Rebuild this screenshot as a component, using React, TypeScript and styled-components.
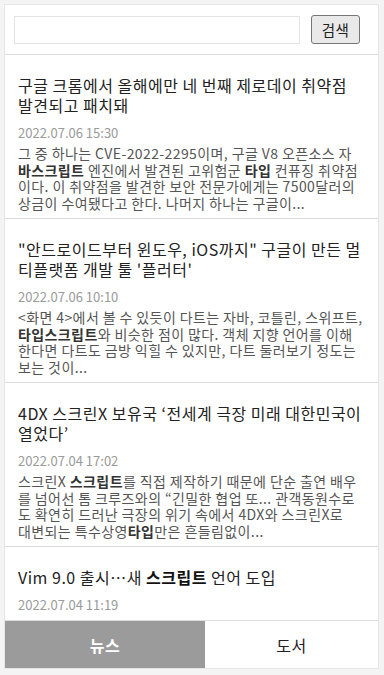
import React from "react";
import styled, { createGlobalStyle } from "styled-components";

const GlobalStyle = createGlobalStyle`
  * {
    box-sizing: border-box;
  }
  body {
    margin: 0;
    background: #f4f4f4;
    font-family: "Noto Sans CJK KR", "Noto Sans", sans-serif;
    color: #222;
  }
`;

const Page = styled.div`
  display: flex;
  flex-direction: column;
  width: 375px;
  height: 665px;
  margin: 4px 0 0 4px;
  background: #fff;
  border: 1px solid #e6e6e6;
  overflow: hidden;
`;

const SearchBar = styled.form`
  display: flex;
  align-items: center;
  gap: 11px;
  padding: 10px 18px 10px 9px;
  border-bottom: 1px solid #dcdcdc;
`;

const SearchInput = styled.input`
  flex: 1;
  height: 28px;
  border: 1px solid #e4e4e4;
  outline: none;
  font-family: inherit;
  font-size: 14px;
  padding: 0 6px;
`;

const SearchButton = styled.button`
  width: 49px;
  height: 29px;
  background: #e9e9e9;
  border: 1px solid #767676;
  border-radius: 3px;
  font-family: inherit;
  font-size: 14.5px;
  letter-spacing: 0.5px;
  color: #222;
  padding: 0;
`;

const NewsList = styled.ul`
  flex: 1;
  list-style: none;
  margin: 0;
  padding: 0;
  overflow: hidden;
`;

const NewsItem = styled.li`
  height: 164px;
  padding: 20px 13px 0 13px;
  border-bottom: 1px solid #dcdcdc;
  overflow: hidden;
`;

const Title = styled.h2`
  margin: 0;
  font-size: 16px;
  font-weight: 400;
  letter-spacing: 0.5px;
  line-height: 20px;
  color: #222;

  b {
    font-weight: 700;
    color: #111;
  }
`;

const DateText = styled.div`
  margin-top: 9px;
  font-size: 13px;
  line-height: 17px;
  color: #9a9a9a;
`;

const Summary = styled.p`
  margin: 4px 0 0;
  font-size: 14px;
  letter-spacing: 0.4px;
  line-height: 16.6px;
  color: #555;

  b {
    font-weight: 700;
    color: #333;
  }
`;

const SummaryLine = styled.span`
  display: block;
  white-space: nowrap;
`;

const TabBar = styled.nav`
  display: grid;
  grid-template-columns: 200px 1fr;
  height: 48px;
  flex-shrink: 0;
  border-top: 1px solid #dcdcdc;
`;

const Tab = styled.button<{ $active?: boolean }>`
  border: none;
  margin: 0;
  padding: 0;
  font-family: inherit;
  font-size: 16px;
  letter-spacing: 0.5px;
  font-weight: ${(p) => (p.$active ? 700 : 400)};
  color: ${(p) => (p.$active ? "#fff" : "#222")};
  background: ${(p) => (p.$active ? "#9b9b9b" : "#fff")};
`;

type News = {
  title: React.ReactNode;
  date: string;
  summary?: React.ReactNode[];
};

const news: News[] = [
  {
    title: "구글 크롬에서 올해에만 네 번째 제로데이 취약점 발견되고 패치돼",
    date: "2022.07.06 15:30",
    summary: [
      "그 중 하나는 CVE-2022-2295이며, 구글 V8 오픈소스 자",
      <>
        <b>바스크립트</b> 엔진에서 발견된 고위험군 <b>타입</b> 컨퓨징 취약점
      </>,
      "이다. 이 취약점을 발견한 보안 전문가에게는 7500달러의",
      "상금이 수여됐다고 한다. 나머지 하나는 구글이...",
    ],
  },
  {
    title: "\"안드로이드부터 윈도우, iOS까지\" 구글이 만든 멀티플랫폼 개발 툴 '플러터'",
    date: "2022.07.06 10:10",
    summary: [
      "<화면 4>에서 볼 수 있듯이 다트는 자바, 코틀린, 스위프트,",
      <>
        <b>타입스크립트</b>와 비슷한 점이 많다. 객체 지향 언어를 이해
      </>,
      "한다면 다트도 금방 익힐 수 있지만, 다트 둘러보기 정도는",
      "보는 것이...",
    ],
  },
  {
    title: "4DX 스크린X 보유국 ‘전세계 극장 미래 대한민국이 열었다’",
    date: "2022.07.04 17:02",
    summary: [
      <>
        스크린X <b>스크립트</b>를 직접 제작하기 때문에 단순 출연 배우
      </>,
      "를 넘어선 톰 크루즈와의 “긴밀한 협업 또... 관객동원수로",
      "도 확연히 드러난 극장의 위기 속에서 4DX와 스크린X로",
      <>
        대변되는 특수상영<b>타입</b>만은 흔들림없이...
      </>,
    ],
  },
  {
    title: (
      <>
        Vim 9.0 출시…새 <b>스크립트</b> 언어 도입
      </>
    ),
    date: "2022.07.04 11:19",
  },
];

export default function App() {
  return (
    <>
      <GlobalStyle />
      <Page>
        <SearchBar onSubmit={(e) => e.preventDefault()}>
          <SearchInput type="text" />
          <SearchButton type="submit">검색</SearchButton>
        </SearchBar>
        <NewsList>
          {news.map((item, i) => (
            <NewsItem key={i}>
              <Title>{item.title}</Title>
              <DateText>{item.date}</DateText>
              {item.summary && (
                <Summary>
                  {item.summary.map((line, j) => (
                    <SummaryLine key={j}>{line}</SummaryLine>
                  ))}
                </Summary>
              )}
            </NewsItem>
          ))}
        </NewsList>
        <TabBar>
          <Tab $active>뉴스</Tab>
          <Tab>도서</Tab>
        </TabBar>
      </Page>
    </>
  );
}
